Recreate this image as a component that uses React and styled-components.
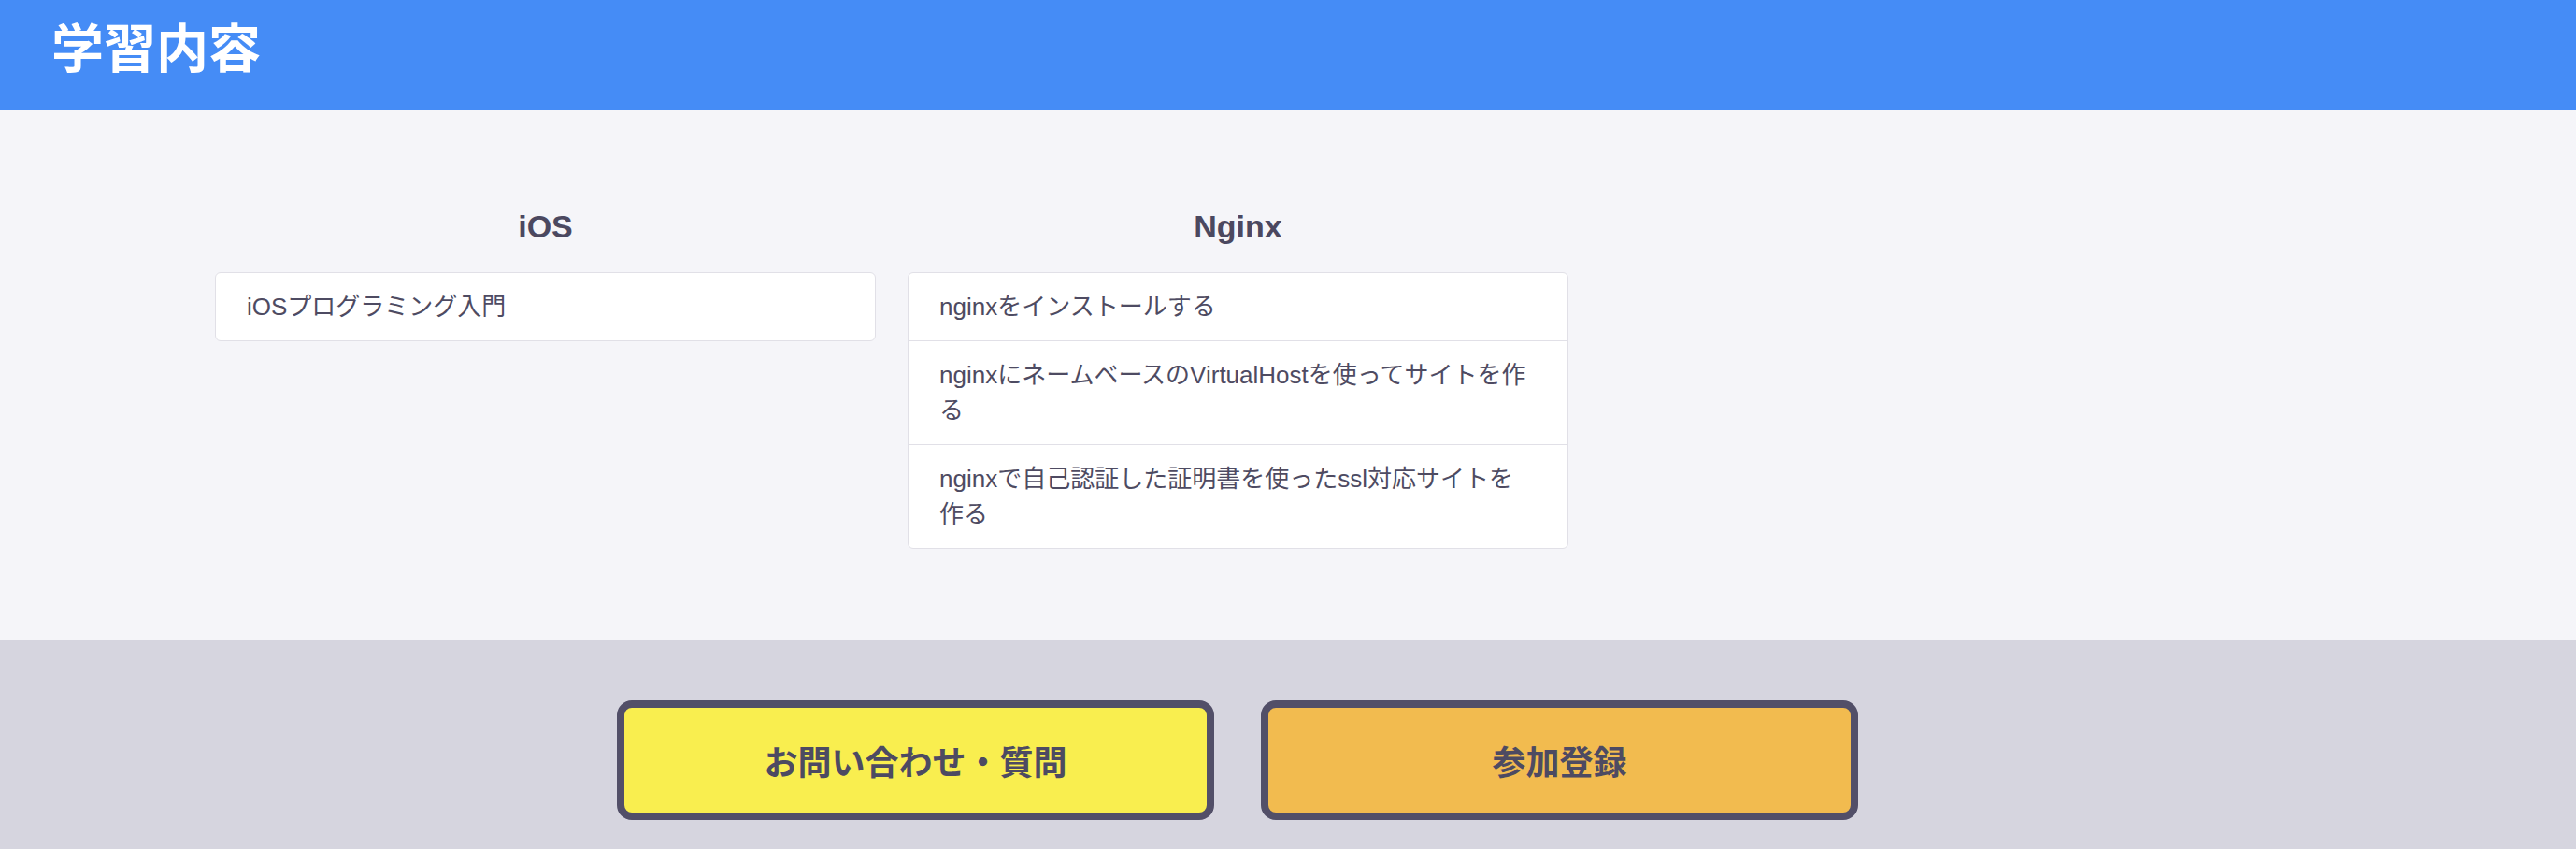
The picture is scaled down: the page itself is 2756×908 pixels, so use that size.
import React from "react";
import styled, { createGlobalStyle } from "styled-components";

const GlobalStyle = createGlobalStyle`
  html, body {
    margin: 0;
    padding: 0;
  }
  body {
    font-family: "Liberation Sans", "Noto Sans CJK JP", sans-serif;
    background: #d6d5df;
  }
  * { box-sizing: border-box; }
`;

const Page = styled.div`
  display: flex;
  flex-direction: column;
  width: 100%;
`;

const Header = styled.header`
  background: #458cf6;
  height: 118px;
  padding: 14px 55px 0;
`;

const PageTitle = styled.h1`
  margin: 0;
  color: #ffffff;
  font-family: "Noto Sans CJK JP", sans-serif;
  font-weight: 700;
  font-size: 56px;
  line-height: 67px;
`;

const Content = styled.main`
  background: #f5f5f9;
  padding: 104px 0 98px 230px;
  display: flex;
  align-items: flex-start;
  gap: 34px;
`;

const Column = styled.section`
  width: 707px;
  display: flex;
  flex-direction: column;
`;

const ColumnTitle = styled.h2`
  margin: 0 0 29px;
  text-align: center;
  color: #4b4860;
  font-size: 34px;
  line-height: 40px;
  font-weight: 700;
`;

const List = styled.ul`
  list-style: none;
  margin: 0;
  padding: 0;
  background: #ffffff;
  border: 1px solid #e1e0e7;
  border-radius: 6px;
  overflow: hidden;
`;

const Item = styled.li`
  padding: 17px 33px;
  color: #4e4b62;
  font-size: 26px;
  line-height: 38px;
  & + & {
    border-top: 1px solid #e1e0e7;
  }
`;

const Footer = styled.footer`
  background: #d6d5df;
  padding: 64px 108px 64px 0;
  display: flex;
  justify-content: center;
  gap: 50px;
`;

const ActionButton = styled.button`
  width: 639px;
  height: 128px;
  border: 8px solid #524f68;
  border-radius: 16px;
  background: ${(p) => p.$bg};
  color: #4d4a62;
  font-family: "Noto Sans CJK JP", sans-serif;
  font-weight: 700;
  font-size: 36px;
  line-height: 1;
  cursor: pointer;
  display: flex;
  align-items: center;
  justify-content: center;
  padding: 0;
`;

const courses = [
  { title: "iOS", items: ["iOSプログラミング入門"] },
  {
    title: "Nginx",
    items: [
      "nginxをインストールする",
      "nginxにネームベースのVirtualHostを使ってサイトを作る",
      "nginxで自己認証した証明書を使ったssl対応サイトを作る",
    ],
  },
];

export default function App() {
  return (
    <Page>
      <GlobalStyle />
      <Header>
        <PageTitle>学習内容</PageTitle>
      </Header>
      <Content>
        {courses.map((c) => (
          <Column key={c.title}>
            <ColumnTitle>{c.title}</ColumnTitle>
            <List>
              {c.items.map((it) => (
                <Item key={it}>{it}</Item>
              ))}
            </List>
          </Column>
        ))}
      </Content>
      <Footer>
        <ActionButton $bg="#f9ee4f">お問い合わせ・質問</ActionButton>
        <ActionButton $bg="#f2bb4f">参加登録</ActionButton>
      </Footer>
    </Page>
  );
}
